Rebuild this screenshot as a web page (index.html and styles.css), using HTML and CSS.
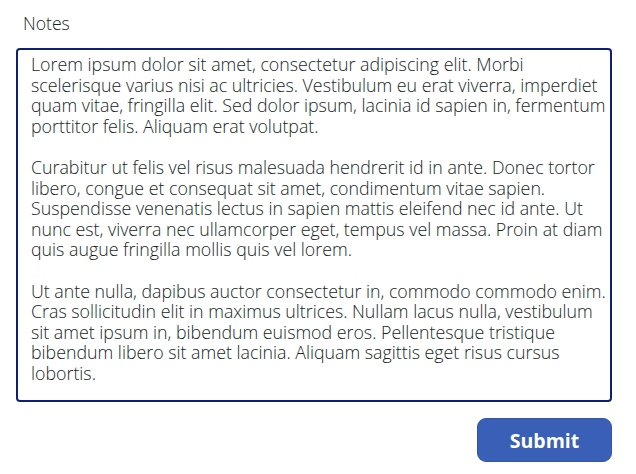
FILE: index.html
```html
<!DOCTYPE html>
<html lang="en">
<head>
<meta charset="utf-8">
<title>Notes</title>
<link rel="stylesheet" href="styles.css">
</head>
<body>
<form class="form">
  <label class="label" for="notes">Notes</label>
  <textarea class="notes" id="notes" spellcheck="false">Lorem ipsum dolor sit amet, consectetur adipiscing elit. Morbi scelerisque varius nisi ac ultricies. Vestibulum eu erat viverra, imperdiet quam vitae, fringilla elit. Sed dolor ipsum, lacinia id sapien in, fermentum porttitor felis. Aliquam erat volutpat.

Curabitur ut felis vel risus malesuada hendrerit id in ante. Donec tortor libero, congue et consequat sit amet, condimentum vitae sapien. Suspendisse venenatis lectus in sapien mattis eleifend nec id ante. Ut nunc est, viverra nec ullamcorper eget, tempus vel massa. Proin at diam quis augue fringilla mollis quis vel lorem.

Ut ante nulla, dapibus auctor consectetur in, commodo commodo enim. Cras sollicitudin elit in maximus ultrices. Nullam lacus nulla, vestibulum sit amet ipsum in, bibendum euismod eros. Pellentesque tristique bibendum libero sit amet lacinia. Aliquam sagittis eget risus cursus lobortis.</textarea>
  <div class="actions">
    <button class="submit" type="button">Submit</button>
  </div>
</form>
</body>
</html>
```
FILE: styles.css
```css
html, body {
  margin: 0;
  padding: 0;
  background: #ffffff;
}
body {
  font-family: "Open Sans", "Noto Sans", sans-serif;
  color: #323130;
}
.form {
  display: flex;
  flex-direction: column;
  padding: 11px 24px 0 16px;
  width: 596px;
}
.label {
  font-size: 17.6px;
  font-weight: 300;
  line-height: 24px;
  padding-left: 7px;
  margin-bottom: 13px;
  color: #201f1e;
}
.notes {
  box-sizing: border-box;
  width: 596px;
  height: 354px;
  border: 2px solid #0f1f74;
  border-radius: 4px;
  padding: 4px 2px 0 13px;
  margin: 0;
  font-family: "Open Sans", "Noto Sans", sans-serif;
  font-size: 17.8px;
  font-weight: 300;
  line-height: 20.6px;
  color: #201f1e;
  resize: none;
  overflow: hidden;
  outline: none;
}
.actions {
  display: flex;
  justify-content: flex-end;
  margin-top: 16px;
}
.submit {
  width: 135px;
  height: 44px;
  border: 1px solid #3355a6;
  border-radius: 9px;
  background: #3a5fb6;
  color: #ffffff;
  font-family: "Open Sans", "Noto Sans", sans-serif;
  font-weight: 700;
  font-size: 19.5px;
  cursor: pointer;
}
```
